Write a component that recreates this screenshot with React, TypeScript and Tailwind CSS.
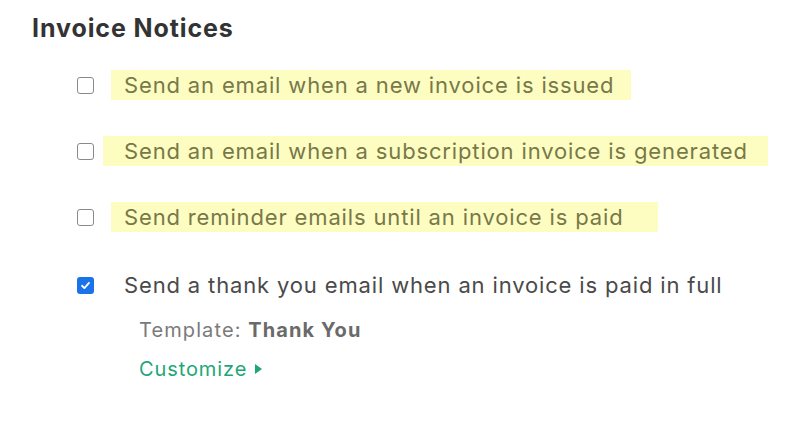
import React from "react";

const Unchecked = () => (
  <span className="inline-block w-[17px] h-[17px] rounded-[3px] border-[1.5px] border-[#8a8a8a] bg-white shrink-0" />
);

const Checked = () => (
  <span className="inline-flex items-center justify-center w-[17px] h-[17px] rounded-[3px] bg-[#1a73e8] shrink-0">
    <svg width="11" height="11" viewBox="0 0 12 12" fill="none">
      <path d="M2.2 6.3 L4.8 8.8 L9.8 3.2" stroke="white" strokeWidth="2" strokeLinecap="round" strokeLinejoin="round" />
    </svg>
  </span>
);

export default function App() {
  return (
    <div
      className="w-[800px] h-[432px] bg-white relative overflow-hidden"
      style={{ fontFamily: "Inter, 'Noto Sans', sans-serif" }}
    >
      <div className="pt-[13px] pl-[32px] text-[25px] font-bold text-[#333333] tracking-[0.9px] leading-[30px]">
        Invoice Notices
      </div>
      <div className="mt-[27px] text-[22px] tracking-[0.85px] flex flex-col gap-[36px]">
        <div className="flex items-center h-[30px]">
          <div className="w-[111px] flex justify-end pr-[17px]"><Unchecked /></div>
          <div className="h-[30px] flex items-center bg-[#fdfdc2] text-[#787848] pl-[13px] w-[520px] whitespace-nowrap">
            Send an email when a new invoice is issued
          </div>
        </div>
        <div className="flex items-center h-[30px]">
          <div className="w-[103px] flex justify-end pr-[9px]"><Unchecked /></div>
          <div className="h-[30px] flex items-center bg-[#fdfdc2] text-[#787848] pl-[21px] w-[665px] whitespace-nowrap">
            Send an email when a subscription invoice is generated
          </div>
        </div>
        <div className="flex items-center h-[30px]">
          <div className="w-[111px] flex justify-end pr-[17px]"><Unchecked /></div>
          <div className="h-[30px] flex items-center bg-[#fdfdc2] text-[#787848] pl-[13px] w-[547px] whitespace-nowrap">
            Send reminder emails until an invoice is paid
          </div>
        </div>
      </div>
      <div className="mt-[38px]">
        <div className="flex items-center h-[30px] text-[22px] tracking-[0.85px]">
          <div className="w-[111px] flex justify-end pr-[17px]"><Checked /></div>
          <div className="pl-[13px] text-[#4a4a4a] whitespace-nowrap">Send a thank you email when an invoice is paid in full</div>
        </div>
        <div className="pl-[139px] mt-[15px] text-[20px] tracking-[1.1px] text-[#7a7a7a] leading-[30px]">
          Template: <span className="font-bold text-[#6a6a6a]">Thank You</span>
        </div>
        <div className="pl-[139px] mt-[9px] text-[20px] tracking-[0.9px] text-[#1ea678] leading-[30px] flex items-center gap-[8px]">
          Customize
          <svg width="7" height="10" viewBox="0 0 7 10"><path d="M0 0 L7 5 L0 10 Z" fill="#1ea678" /></svg>
        </div>
      </div>
    </div>
  );
}
